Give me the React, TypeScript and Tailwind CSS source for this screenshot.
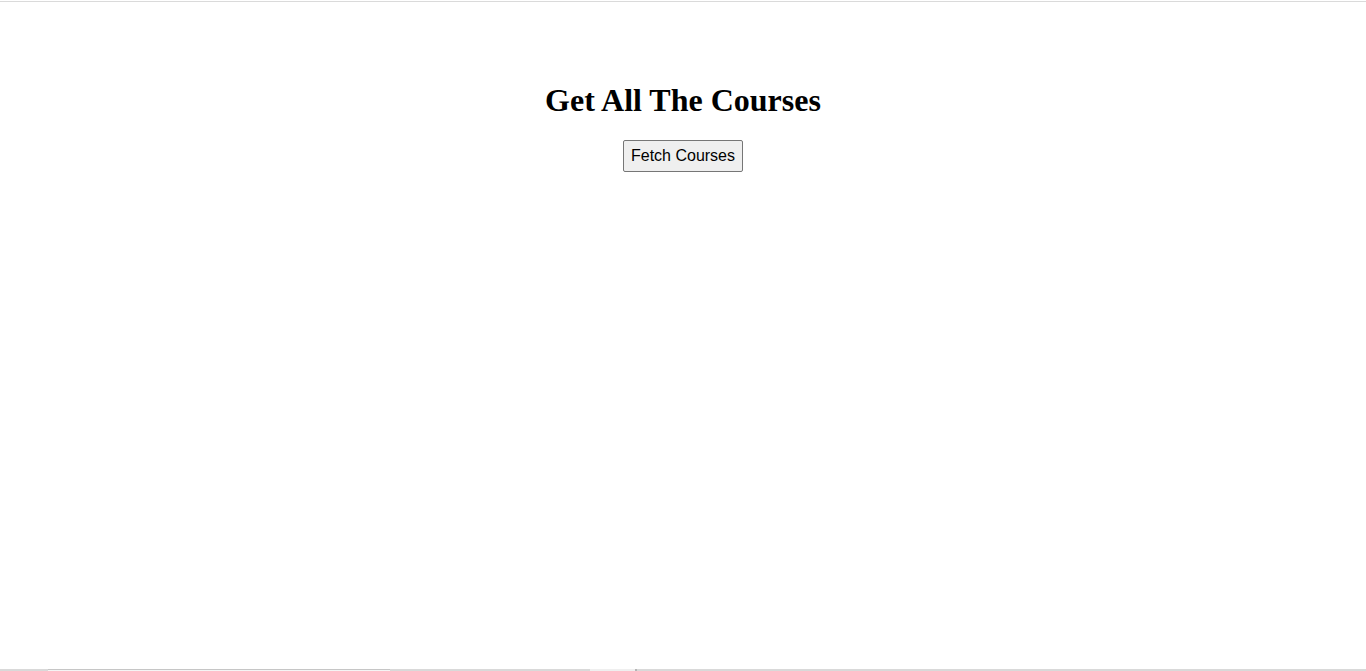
import React from "react";

export default function App() {
  return (
    <div className="flex h-[671px] w-full flex-col bg-white">
      <div className="h-px bg-white" />
      <div className="h-px bg-[#dadada]" />
      <main className="flex flex-1 flex-col items-center">
        <h1 className="mt-[81px] text-[32px] font-bold leading-[35px] text-black [font-family:'Liberation_Serif','Times_New_Roman',serif]">
          Get All The Courses
        </h1>
        <button className="mt-[22px] rounded-[2px] border border-[#767676] bg-[#efefef] px-[7px] py-[6px] text-[16px] leading-[18px] text-black [font-family:'Liberation_Sans',Arial,sans-serif]">
          Fetch Courses
        </button>
      </main>
      <div className="flex h-[2px] w-full">
        <div className="w-[48px] bg-[#d9d9d9]" />
        <div className="w-[342px] border-t border-[#c6c6c6] bg-[#f4f4f4]" />
        <div className="w-[200px] bg-[#d9d9d9]" />
        <div className="w-[45px] bg-[#efefef]" />
        <div className="w-[2px] bg-[#b5b5b5]" />
        <div className="flex-1 bg-[#d9d9d9]" />
      </div>
    </div>
  );
}
